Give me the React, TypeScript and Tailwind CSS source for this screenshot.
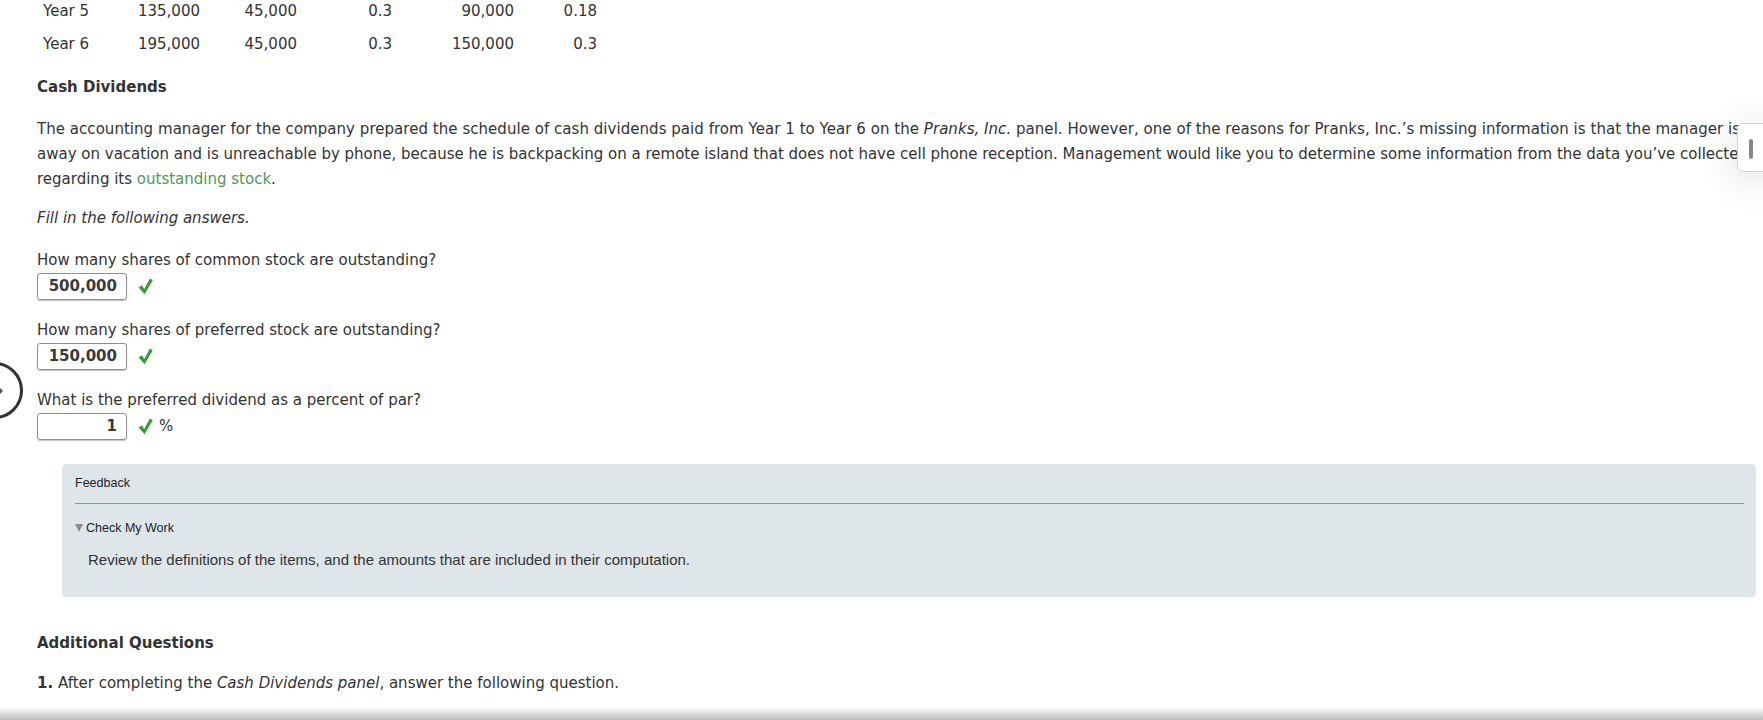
import React from "react";

const rows = [
  { year: "Year 5", a: "135,000", b: "45,000", c: "0.3", d: "90,000", e: "0.18" },
  { year: "Year 6", a: "195,000", b: "45,000", c: "0.3", d: "150,000", e: "0.3" },
];

const questions = [
  { label: "How many shares of common stock are outstanding?", value: "500,000", unit: "" },
  { label: "How many shares of preferred stock are outstanding?", value: "150,000", unit: "" },
  { label: "What is the preferred dividend as a percent of par?", value: "1", unit: "%" },
];

function Check() {
  return (
    <svg width="15" height="17" viewBox="0 0 15 17" className="shrink-0">
      <path d="M0.6 9.4 L3.9 7.2 L6.2 11 L11.9 0.6 L14.8 2.2 L6.6 16.2 Z" fill="#3b9a3d" />
    </svg>
  );
}

export default function App() {
  return (
    <div className="relative w-full h-[720px] overflow-hidden bg-white text-[#333] text-[15px] font-['DejaVu_Sans',Verdana,sans-serif]">
      <div className="pl-[37px]">
        {/* table tail */}
        <div className="-mt-[5px] pl-[6px]">
          {rows.map((r) => (
            <div key={r.year} className="flex h-[33px] items-center">
              <div className="w-[70px]">{r.year}</div>
              <div className="w-[87px] text-right">{r.a}</div>
              <div className="w-[97px] text-right">{r.b}</div>
              <div className="w-[95px] text-right">{r.c}</div>
              <div className="w-[122px] text-right">{r.d}</div>
              <div className="w-[83px] text-right">{r.e}</div>
            </div>
          ))}
        </div>

        <h3 className="mt-[16px] leading-[20px] font-bold">Cash Dividends</h3>

        <p className="mt-[20px] leading-[25px] whitespace-nowrap">
          <span className="tracking-[0.04px]">
            The accounting manager for the company prepared the schedule of cash dividends paid from Year 1 to Year 6 on the{" "}
            <i>Pranks, Inc.</i> panel. However, one of the reasons for Pranks, Inc.’s missing information is that the manager is
          </span>
          <br />
          away on vacation and is unreachable by phone, because he is backpacking on a remote island that does not have cell
          phone reception. Management would like you to determine some information from the data you’ve collected
          <br />
          regarding its <span className="text-[#4f9a55]">outstanding stock</span>.
        </p>

        <p className="mt-[14px] leading-[25px] italic">Fill in the following answers.</p>

        <div className="mt-[19px] flex flex-col gap-[20px]">
          {questions.map((q) => (
            <div key={q.label}>
              <div className="leading-[20px]">{q.label}</div>
              <div className="mt-[3px] flex items-center">
                <div className="w-[90px] h-[27px] border border-[#8f8f8f] rounded-[3px] shadow-[0_1px_1px_rgba(0,0,0,0.25)] flex items-center justify-end pr-[9px] font-bold text-[15px] text-[#3a3a3a]">
                  {q.value}
                </div>
                <div className="ml-[11px]">
                  <Check />
                </div>
                {q.unit && <span className="ml-[6px]">{q.unit}</span>}
              </div>
            </div>
          ))}
        </div>
      </div>

      {/* feedback */}
      <div className="mt-[24px] ml-[62px] mr-[7px] rounded-[4px] bg-[#dfe6e9] pt-[11px] pb-[29px] px-[13px] pr-[12px] font-['Liberation_Sans',Arial,sans-serif] text-[#222]">
        <div className="text-[12.5px] leading-[16px]">Feedback</div>
        <div className="mt-[12px] border-t border-[#8e9598]" />
        <div className="mt-[16px] flex items-center text-[12.5px] leading-[16px]">
          <span className="mr-[3px] w-0 h-0 border-x-[4px] border-x-transparent border-t-[8px] border-t-[#8a8a8a]" />
          Check My Work
        </div>
        <div className="mt-[16px] pl-[13px] text-[15px] leading-[16px] text-[#333]">
          Review the definitions of the items, and the amounts that are included in their computation.
        </div>
      </div>

      <div className="pl-[37px]">
        <h3 className="mt-[36px] leading-[20px] font-bold">Additional Questions</h3>
        <p className="mt-[20px] leading-[20px]">
          <b>1.</b> After completing the <i>Cash Dividends panel</i>, answer the following question.
        </p>
      </div>

      {/* round nav button peeking in from the left */}
      <div className="absolute left-[-34px] top-[362px] w-[57px] h-[57px] rounded-full border-[3px] border-[#333] bg-white flex items-center justify-end">
        <div className="mr-[17px] w-0 h-0 border-y-[5px] border-y-transparent border-l-[5px] border-l-[#555]" />
      </div>

      {/* floating scroll handle */}
      <div className="absolute left-[1737px] top-[123px] w-[40px] h-[49px] rounded-[6px] border border-[#d4d4d4] bg-white shadow-[0_6px_40px_rgba(0,0,0,0.14)]">
        <div className="ml-[11px] mt-[15px] w-[4px] h-[20px] rounded-full bg-[#888]" />
      </div>

      {/* bottom toolbar shadow */}
      <div className="absolute left-0 right-0 bottom-0 h-[13px] bg-gradient-to-b from-white to-[#bdbdbd]" />
    </div>
  );
}
